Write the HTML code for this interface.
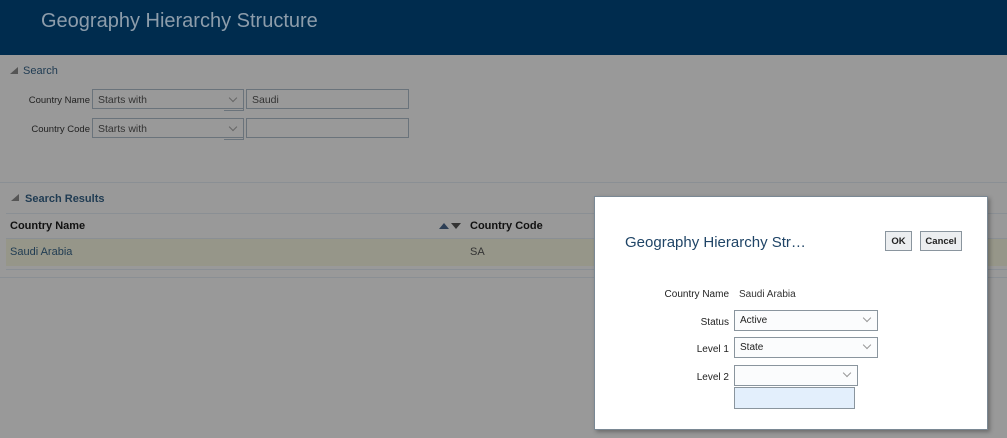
<!DOCTYPE html>
<html><head><meta charset="utf-8"><style>
*{box-sizing:border-box;margin:0;padding:0}
body{width:1007px;height:438px;overflow:hidden;background:#999;font-family:"Liberation Sans",Arial,sans-serif;position:relative;font-size:11px;color:#222}
.a{position:absolute}
.hdr{left:0;top:0;width:1007px;height:55px;background:#002c4e}
.hdr span{position:absolute;left:41px;top:10px;font-size:20px;color:#8d9dab;font-family:"Liberation Sans",sans-serif}
.lbl{font-size:10px;color:#222;text-align:right}
.box{border:1px solid #6a737b;background:#999;height:20px;font-size:10.5px;padding:4px 5px;color:#333}
.chev{position:absolute;width:6px;height:6px;border-right:1px solid #666;border-bottom:1px solid #666;transform:rotate(45deg)}
.line{height:1px;background:#8a8f94}
.dlg{left:594px;top:196px;width:394px;height:234px;background:#fff;border:1px solid #7a8894;box-shadow:2px 2px 4px rgba(0,0,0,.3)}
.btn{border:1px solid #8a959e;background:#eceef0;font-size:9.5px;font-weight:bold;height:20px;padding:4px 0;text-align:center;color:#222}
.wb{border:1px solid #8a959e;background:#fbfcfd;height:21px;font-size:10px;padding:4px 5px;color:#222}
</style></head><body>
<div class="a hdr"><span>Geography Hierarchy Structure</span></div>
<div class="a" style="left:10px;top:67px;width:0;height:0;border-left:8px solid transparent;border-bottom:7px solid #555"></div>
<div class="a" style="left:23px;top:65px;font-size:11px;color:#1f3b52">Search</div>
<div class="a lbl" style="left:20px;top:95px;width:70px;font-size:9.5px">Country Name</div>
<div class="a box" style="left:92px;top:89px;width:152px">Starts with</div>
<div class="a" style="left:224px;top:89px;width:20px;height:22px;border-right:1px solid #6a737b;border-bottom:1px solid #6a737b"></div>
<div class="chev" style="left:230px;top:95px"></div>
<div class="a box" style="left:246px;top:89px;width:163px">Saudi</div>
<div class="a lbl" style="left:20px;top:124px;width:70px;font-size:9.5px">Country Code</div>
<div class="a box" style="left:92px;top:118px;width:152px">Starts with</div>
<div class="a" style="left:224px;top:118px;width:20px;height:22px;border-right:1px solid #6a737b;border-bottom:1px solid #6a737b"></div>
<div class="chev" style="left:230px;top:124px"></div>
<div class="a box" style="left:246px;top:118px;width:163px"></div>
<div class="a line" style="left:0;top:182px;width:1007px"></div>
<div class="a" style="left:11px;top:194px;width:0;height:0;border-left:8px solid transparent;border-bottom:7px solid #555"></div>
<div class="a" style="left:25px;top:193px;font-size:11px;font-weight:bold;color:#1f3b52">Search Results</div>
<div class="a line" style="left:6px;top:213px;width:1001px"></div>
<div class="a" style="left:10px;top:220px;font-size:11px;font-weight:bold;color:#111">Country Name</div>
<div class="a" style="left:439px;top:223px;width:0;height:0;border-left:5px solid transparent;border-right:5px solid transparent;border-bottom:6px solid #2c3e55"></div>
<div class="a" style="left:451px;top:223px;width:0;height:0;border-left:5px solid transparent;border-right:5px solid transparent;border-top:6px solid #333"></div>
<div class="a" style="left:470px;top:220px;font-size:11px;font-weight:bold;color:#111">Country Code</div>
<div class="a line" style="left:6px;top:238px;width:1001px"></div>
<div class="a" style="left:6px;top:239px;width:1001px;height:27px;background:#969689"></div>
<div class="a" style="left:10px;top:246px;font-size:11px;color:#1f3b52">Saudi Arabia</div>
<div class="a" style="left:470px;top:246px;font-size:11px;color:#333">SA</div>
<div class="a line" style="left:6px;top:269px;width:1001px"></div>
<div class="a line" style="left:0;top:277px;width:1007px"></div>
<div class="a dlg">
 <div class="a" style="left:30px;top:37px;font-size:15px;color:#1f4466">Geography Hierarchy Str…</div>
 <div class="a btn" style="left:290px;top:34px;width:27px">OK</div>
 <div class="a btn" style="left:325px;top:34px;width:42px">Cancel</div>
 <div class="a lbl" style="left:40px;top:92px;width:94px">Country Name</div>
 <div class="a" style="left:144px;top:92px;font-size:10px;color:#333">Saudi Arabia</div>
 <div class="a lbl" style="left:40px;top:120px;width:94px">Status</div>
 <div class="a wb" style="left:139px;top:113px;width:144px">Active</div>
 <div class="chev" style="left:269px;top:118px;border-color:#999"></div>
 <div class="a lbl" style="left:40px;top:147px;width:94px">Level 1</div>
 <div class="a wb" style="left:139px;top:140px;width:144px">State</div>
 <div class="a" style="left:263px;top:140px;width:20px;height:1px;background:#8a959e"></div>
 <div class="chev" style="left:269px;top:145px;border-color:#999"></div>
 <div class="a lbl" style="left:40px;top:175px;width:94px">Level 2</div>
 <div class="a wb" style="left:139px;top:168px;width:124px"></div>
 <div class="chev" style="left:249px;top:173px;border-color:#999"></div>
 <div class="a" style="left:139px;top:190px;width:121px;height:22px;background:#e3effc;border:1px solid #8a959e"></div>
</div>
</body></html>
